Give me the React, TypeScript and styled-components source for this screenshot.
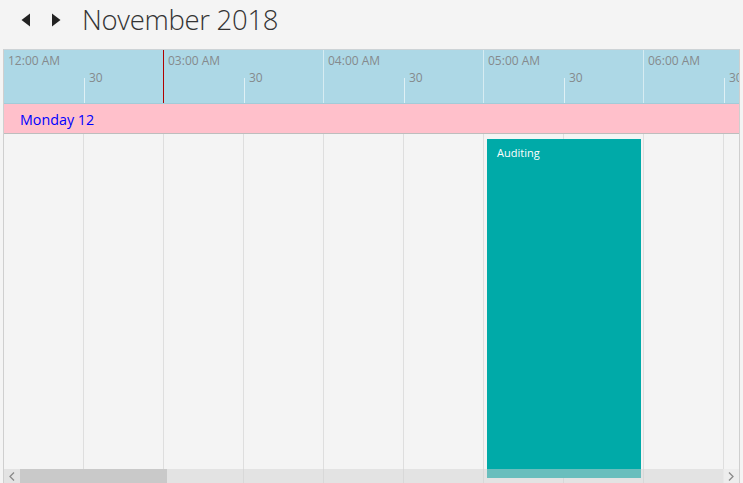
import React from "react";
import styled, { createGlobalStyle } from "styled-components";

const Global = createGlobalStyle`
  html, body { margin: 0; padding: 0; background: #f4f4f4; }
  body { font-family: "Open Sans", "Noto Sans", sans-serif; overflow: hidden; }
`;

const Page = styled.div`
  width: 743px;
  height: 483px;
  display: flex;
  flex-direction: column;
  background: #f4f4f4;
  overflow: hidden;
`;

const Toolbar = styled.div`
  height: 49px;
  display: flex;
  align-items: center;
  padding-left: 21px;
  box-sizing: border-box;
`;

const NavButton = styled.button`
  border: 0;
  background: transparent;
  padding: 0;
  width: 10px;
  height: 14px;
  margin-right: 20px;
  display: flex;
  align-items: center;
  justify-content: center;
  cursor: pointer;
  margin-top: -10px;
`;

const Title = styled.h1`
  margin: -10px 0 0 1px;
  font-family: "Open Sans", sans-serif;
  font-weight: 300;
  font-size: 27.5px;
  line-height: 36px;
  color: #333;
  letter-spacing: -0.3px;
`;

const Frame = styled.div`
  margin-left: 3px;
  width: 737px;
  flex: 1;
  box-sizing: border-box;
  border-top: 1px solid #cdd3d6;
  border-left: 1px solid #cfcfcf;
  border-right: 1px solid #cfcfcf;
  display: flex;
  flex-direction: column;
  overflow: hidden;
`;

const Header = styled.div`
  position: relative;
  height: 54px;
  flex-shrink: 0;
  display: flex;
  background: #add8e6;
  border-bottom: 1px solid #a3cbd8;
  box-sizing: border-box;
`;

const HourCell = styled.div<{ $first?: boolean }>`
  position: relative;
  flex: 0 0 160px;
  box-sizing: border-box;
  border-left: ${(p) => (p.$first ? "0" : "1px solid #d6ecf2")};
  margin-left: ${(p) => (p.$first ? "0" : "-1px")};
  display: flex;
`;

const HourLabel = styled.span`
  position: absolute;
  left: 4px;
  top: 3px;
  font-size: 12px;
  line-height: 16px;
  color: #858a8d;
  white-space: nowrap;
`;

const HalfSlot = styled.div`
  flex: 0 0 80px;
  display: flex;
  align-items: flex-end;
`;

const HalfTick = styled.div`
  height: 25px;
  border-left: 1px solid #dff0f5;
  position: relative;
`;

const HalfLabel = styled.span`
  position: absolute;
  left: 4px;
  top: -8px;
  font-size: 12px;
  line-height: 16px;
  color: #858a8d;
`;

const NowMarker = styled.div`
  position: absolute;
  left: 159px;
  top: 0;
  bottom: 0;
  width: 1px;
  background: #b00000;
`;

const DayRow = styled.div`
  height: 30px;
  flex-shrink: 0;
  box-sizing: border-box;
  background: #ffc0cb;
  border-bottom: 1px solid #bdbdbd;
  display: flex;
  align-items: center;
  padding-left: 16px;
`;

const DayLabel = styled.span`
  color: #0000ff;
  font-size: 14.3px;
  line-height: 18px;
  margin-top: 2px;
`;

const Body = styled.div`
  position: relative;
  flex: 1;
  display: flex;
  overflow: hidden;
`;

const Column = styled.div`
  flex: 0 0 80px;
  box-sizing: border-box;
  border-right: 1px solid #dedede;
`;

const Appointment = styled.div`
  position: absolute;
  left: 483px;
  top: 5px;
  width: 154px;
  height: 339px;
  background: #00aaa8;
  color: #fff;
  font-size: 11px;
  line-height: 14px;
  padding: 7px 10px;
  box-sizing: border-box;
`;

const ScrollBar = styled.div`
  position: absolute;
  left: 0;
  right: 0;
  bottom: 0;
  height: 14px;
  background: rgba(210, 210, 210, 0.5);
  display: flex;
  align-items: center;
`;

const ScrollArrow = styled.div`
  width: 16px;
  height: 14px;
  display: flex;
  align-items: center;
  justify-content: center;
  flex-shrink: 0;
`;

const Thumb = styled.div`
  width: 147px;
  height: 14px;
  background: #c9c9c9;
`;

const Spacer = styled.div`
  flex: 1;
`;

const RightArrowZone = styled(ScrollArrow)`
  background: rgba(244, 244, 244, 0.6);
`;

const hours = ["12:00 AM", "03:00 AM", "04:00 AM", "05:00 AM", "06:00 AM"];

export default function App() {
  return (
    <Page>
      <Global />
      <Toolbar>
        <NavButton aria-label="previous">
          <svg width="10" height="14" viewBox="0 0 10 14">
            <polygon points="9,0.5 9,13.5 0.5,7" fill="#222" />
          </svg>
        </NavButton>
        <NavButton aria-label="next">
          <svg width="10" height="14" viewBox="0 0 10 14">
            <polygon points="1,0.5 1,13.5 9.5,7" fill="#222" />
          </svg>
        </NavButton>
        <Title>November 2018</Title>
      </Toolbar>
      <Frame>
        <Header>
          {hours.map((h, i) => (
            <HourCell key={h} $first={i === 0}>
              <HourLabel>{h}</HourLabel>
              <HalfSlot />
              <HalfSlot>
                <HalfTick>
                  <HalfLabel>30</HalfLabel>
                </HalfTick>
              </HalfSlot>
            </HourCell>
          ))}
          <NowMarker />
        </Header>
        <DayRow>
          <DayLabel>Monday 12</DayLabel>
        </DayRow>
        <Body>
          {Array.from({ length: 10 }).map((_, i) => (
            <Column key={i} />
          ))}
          <Appointment>Auditing</Appointment>
          <ScrollBar>
            <ScrollArrow>
              <svg width="6" height="9" viewBox="0 0 6 9">
                <polyline points="5,0.5 1,4.5 5,8.5" fill="none" stroke="#8a8a8a" strokeWidth="1.3" />
              </svg>
            </ScrollArrow>
            <Thumb />
            <Spacer />
            <RightArrowZone>
              <svg width="6" height="9" viewBox="0 0 6 9">
                <polyline points="1,0.5 5,4.5 1,8.5" fill="none" stroke="#8a8a8a" strokeWidth="1.3" />
              </svg>
            </RightArrowZone>
          </ScrollBar>
        </Body>
      </Frame>
    </Page>
  );
}
